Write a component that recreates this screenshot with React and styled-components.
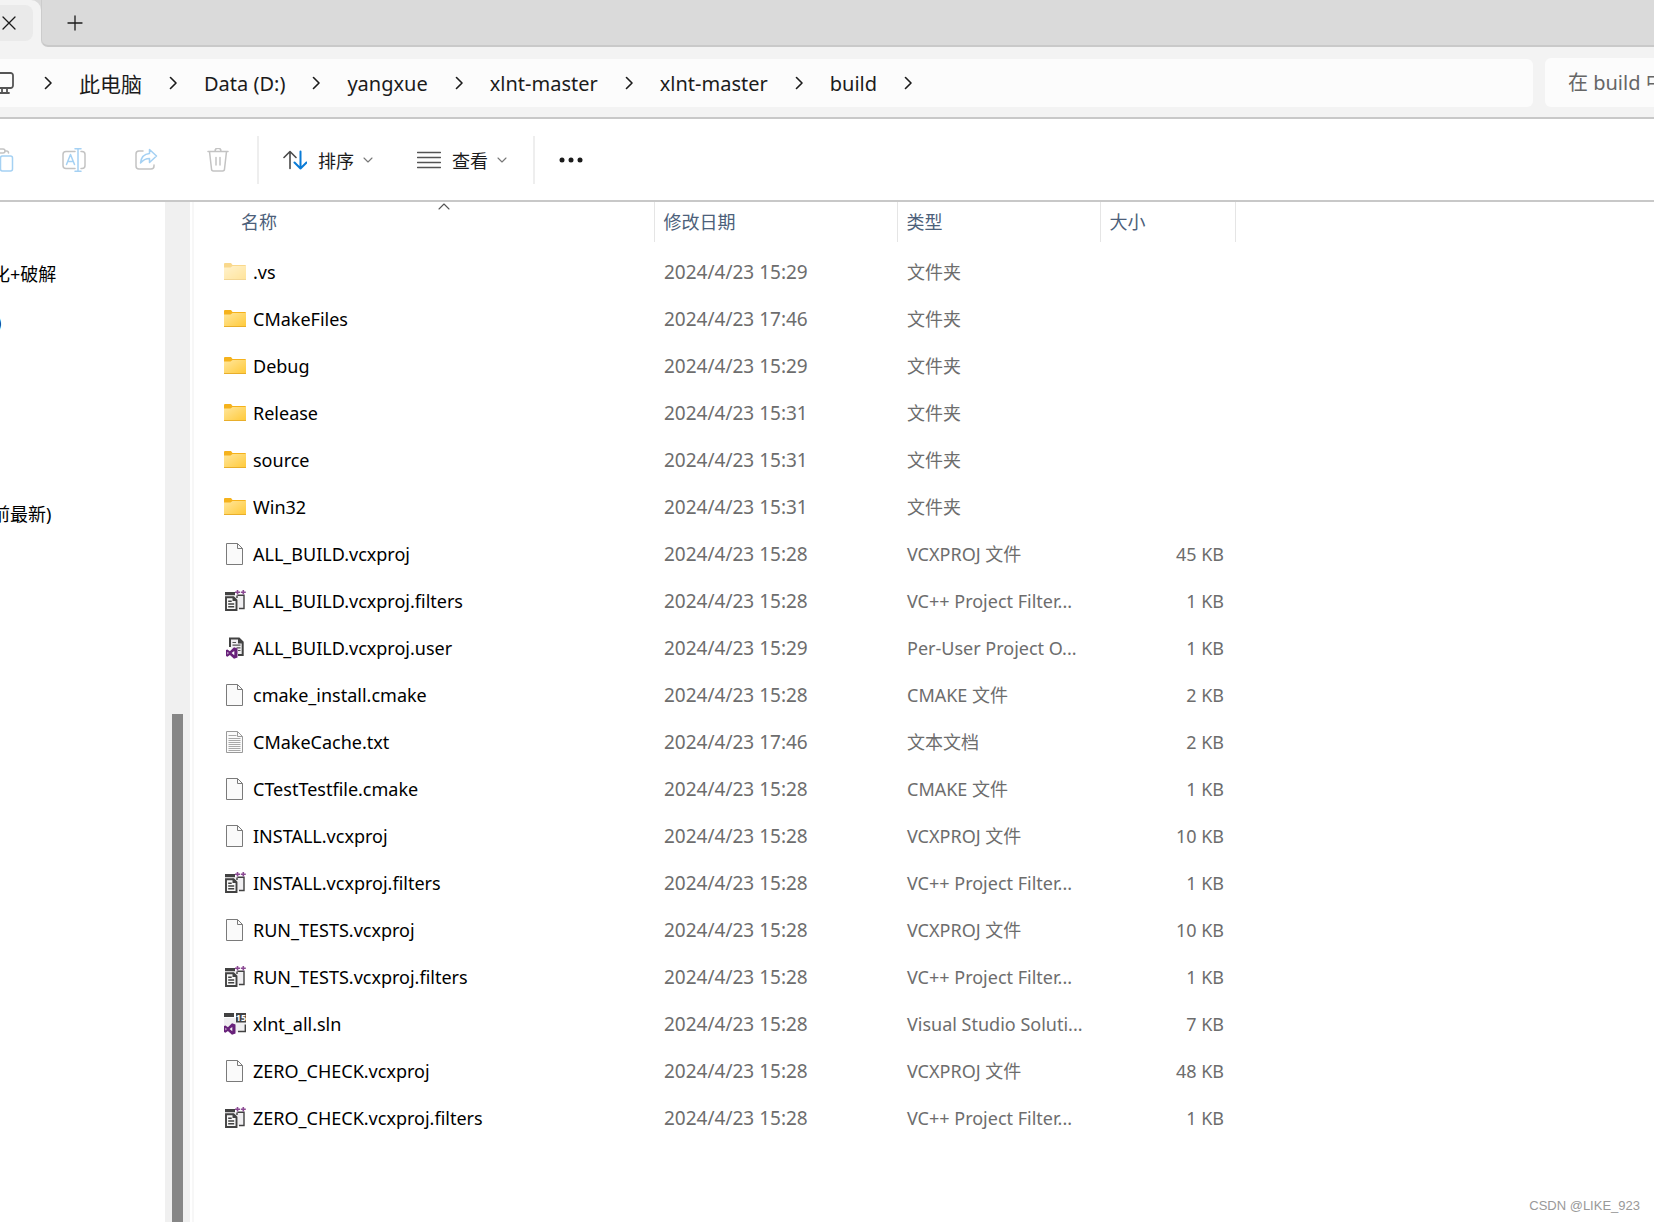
import React from "react";
import styled, { createGlobalStyle } from "styled-components";

const GlobalStyle = createGlobalStyle`
  * {
    box-sizing: border-box;
  }
  body {
    margin: 0;
    background: #ffffff;
    font-family: "Noto Sans", "Noto Sans CJK SC", sans-serif;
    font-size: 18px;
    color: #1b1b1b;
  }
  button, input {
    font: inherit;
    color: inherit;
  }
`;

const Window = styled.div`
  display: flex;
  flex-direction: column;
  width: 100%;
  min-height: 100vh;
  overflow: hidden;
`;

/* ---------- tabs ---------- */
const TabBar = styled.div`
  display: flex;
  height: 47px;
  background: linear-gradient(#dadada 50%, #f3f3f3 50%);
`;
const Tab = styled.div`
  width: 41px;
  padding: 5px 8px 6px 0;
  background: #f3f3f3;
  border-top-right-radius: 10px;
`;
const CloseButton = styled.button`
  display: flex;
  align-items: center;
  width: 100%;
  height: 36px;
  padding: 0 0 0 2px;
  border: 0;
  border-radius: 0 8px 8px 0;
  background: #eaeaea;
`;
const TabStrip = styled.div`
  flex: 1;
  display: flex;
  align-items: center;
  padding-left: 25px;
  background: #dadada;
  border-left: 1px solid #cccccc;
  border-bottom: 2px solid #c9c9c9;
  border-bottom-left-radius: 7px;
`;
const PlainButton = styled.button`
  display: flex;
  align-items: center;
  padding: 0;
  border: 0;
  background: none;
`;

/* ---------- address ---------- */
const AddressBar = styled.div`
  display: flex;
  align-items: flex-end;
  gap: 12px;
  height: 72px;
  padding-bottom: 10px;
  background: #f3f3f3;
  border-bottom: 2px solid #c8c8c8;
`;
const Crumbs = styled.nav`
  flex: 1;
  display: flex;
  align-items: center;
  gap: 27px;
  height: 48px;
  background: #fcfcfc;
  border-radius: 0 6px 6px 0;
  font-size: 20px;
`;
const Crumb = styled.a`
  color: #1b1b1b;
  font-size: ${(props) => (props.$large ? 21 : 20)}px;
  text-decoration: none;
  white-space: nowrap;
`;
const SearchInput = styled.input`
  width: 109px;
  height: 49px;
  padding: 0 0 0 23px;
  border: 0;
  border-radius: 6px 0 0 6px;
  background: #fcfcfc;
  font-size: 20px;

  &::placeholder {
    color: #666666;
    opacity: 1;
  }
`;

/* ---------- toolbar ---------- */
const ToolBar = styled.div`
  display: flex;
  align-items: center;
  height: 83px;
  border-bottom: 2px solid #c8c8c8;
`;
const IconTools = styled.div`
  display: flex;
  gap: 48px;
  width: 257px;
  margin-left: -10px;
  flex: none;
`;
const Divider = styled.div`
  width: 2px;
  height: 48px;
  margin-left: ${(props) => props.$gap || 0}px;
  background: #eeeeee;
`;
const MenuButton = styled(PlainButton)`
  gap: 11px;
  margin-left: ${(props) => props.$gap}px;

  svg:last-child {
    margin-left: -2px;
  }
`;

/* ---------- body ---------- */
const Body = styled.div`
  flex: 1;
  display: flex;
`;
const SideList = styled.ul`
  width: 165px;
  margin: 0;
  padding: 48px 0 0;
  list-style: none;
  overflow: hidden;
`;
const SideItem = styled.li`
  height: 48px;
  line-height: 48px;
  margin-left: -${(props) => props.$hidden || 8}px;
  color: #000000;
  white-space: nowrap;
`;
const ScrollTrack = styled.div`
  display: flex;
  justify-content: center;
  width: 25px;
  background: #f0f0f0;
`;
const ScrollThumb = styled.div`
  width: 11px;
  margin-top: 512px;
  background: #868686;
`;
const Content = styled.main`
  flex: 1;
  margin-left: 2px;
  border-left: 2px solid #f7f7f7;
`;
const FileTable = styled.table`
  width: 100%;
  table-layout: fixed;
  border-collapse: collapse;
`;
const Col = styled.col`
  width: ${(props) => props.$width}px;
`;
const HeadCell = styled.th`
  height: 40px;
  padding: 0 0 0 9px;
  border-right: 1px solid #e5e5e5;
  font-weight: 400;
  line-height: 40px;
  text-align: left;
  color: #4c607a;

  &:last-child {
    border-right: 0;
  }
`;
const SortedLabel = styled.div`
  position: relative;
  margin-left: 29px;
  padding-left: 9px;

  svg {
    position: absolute;
    top: 1px;
    left: 50%;
    margin-left: -5px;
  }
`;
const FileRows = styled.tbody`
  &::before {
    content: "";
    display: block;
    height: 6px;
  }
`;
const Cell = styled.td`
  height: 47px;
  padding: 0 11px 0 10px;
  font-size: ${(props) => (props.$large ? 19 : 18)}px;
  line-height: 24px;
  text-align: ${(props) => props.$align || "left"};
  white-space: nowrap;
  overflow: hidden;
  color: #6d6d6d;
`;
const FileName = styled.div`
  display: flex;
  align-items: center;
  gap: 7px;
  padding-left: 20px;
  color: #000000;

  svg {
    flex: none;
  }
`;
const Watermark = styled.div`
  position: absolute;
  right: 14px;
  bottom: 8px;
  font-family: "Liberation Sans", sans-serif;
  font-size: 13px;
  line-height: 16px;
  color: #999999;
`;

/* ---------- icons ---------- */
const Stroke = ({ w, h, children, color = "#1b1b1b", width = 1.5 }) => (
  <svg width={w} height={h} viewBox={`0 0 ${w} ${h}`} fill="none" stroke={color} strokeWidth={width}
    strokeLinecap="round" strokeLinejoin="round" aria-hidden="true">
    {children}
  </svg>
);

const Chevron = () => (
  <Stroke w={8} h={14} width={1.6}><path d="M1.500 1.500 7 7l-5.500 5.500" /></Stroke>
);
const SmallDown = () => (
  <Stroke w={10} h={6} color="#777777" width={1.1}><path d="M1 1l4 4 4-4" /></Stroke>
);

const gray = "#c3c3c3";
const blue = "#a5d1f3";

const CopyIcon = () => (
  <Stroke w={24} h={24} color={gray}>
    <path d="M9 21H4a2 2 0 0 1-2-2V5a2 2 0 0 1 2-2h3M15 3h1.500a2 2 0 0 1 2 2" />
    <rect x="7" y="1" width="8" height="4" rx="2" />
    <rect x="10.500" y="8" width="12" height="15" rx="2" stroke={blue} fill="#ffffff" />
  </Stroke>
);
const RenameIcon = () => (
  <Stroke w={24} h={24} color={gray}>
    <path d="M13 3.500H4a3 3 0 0 0-3 3v11a3 3 0 0 0 3 3h9M19 3.500h1a3 3 0 0 1 3 3v11a3 3 0 0 1-3 3h-1" />
    <path d="M4.500 16.500 8.500 6.500l4 10M6 13.500h5M16 .8v22.400M13 .8h6M13 23.200h6" stroke={blue} />
  </Stroke>
);
const ShareIcon = () => (
  <Stroke w={24} h={24} color={gray}>
    <path d="M9 3H5a3 3 0 0 0-3 3v12a3 3 0 0 0 3 3h12a3 3 0 0 0 3-3v-1" />
    <path d="M15.500 1.500 22.500 8l-7 6.500v-4c-4 0-6.500 1.500-9 4.500.5-5 3.500-9 9-9.500z" stroke={blue} />
  </Stroke>
);
const TrashIcon = () => (
  <Stroke w={24} h={24} color={gray}>
    <path d="M2 3.500h20M9 3.200a3 3 0 0 1 6 0M3.500 3.500 5.500 21a2 2 0 0 0 2 2h9a2 2 0 0 0 2-2l2-17.500M10 9.500v7.500M14 9.500v7.500" />
  </Stroke>
);
const SortIcon = () => (
  <Stroke w={24} h={20} color="#4a4a4a" width={1.6}>
    <path d="M7 18.500V1.500M1 7.500l6-6 6 6" />
    <path d="M17.500 1.500v17M11.500 12.500l6 6 6-6" stroke="#0a7bd6" strokeWidth="2" />
  </Stroke>
);
const ListIcon = () => (
  <Stroke w={24} h={18} color="#555555"><path d="M.5 1.500h23M.5 6.500h23M.5 11.500h23M.5 16.500h23" /></Stroke>
);

const FolderIcon = ({ faded }) => (
  <svg width="22" height="22" viewBox="0 0 22 22" opacity={faded ? 0.5 : 1} aria-hidden="true">
    <defs>
      <linearGradient id="folder" x1="0" y1="0" x2="1" y2="1">
        <stop offset="0" stopColor="#ffe69c" />
        <stop offset="1" stopColor="#ffc937" />
      </linearGradient>
    </defs>
    <path d="M0 3a1 1 0 0 1 1-1h6l1.500 2H21a1 1 0 0 1 1 1v4H0z" fill="#f5b21c" />
    <path d="M0 6.500h6.500L8.500 5H22v13a1 1 0 0 1-1 1H1a1 1 0 0 1-1-1z" fill="url(#folder)" />
    <path d="M0 18.500h22" stroke="#e8ae2b" />
  </svg>
);
const FileIcon = ({ lines }) => (
  <svg width="22" height="22" viewBox="0 0 22 22" fill="none" stroke={lines ? "#9a9a9a" : "#7a7a7a"} aria-hidden="true">
    <path d="M2.500.5h11l5 5v16h-16z" fill="#fafafa" />
    <path d="M13.500.5v5h5" />
    {lines && <path d="M4.500 4.500h8M4.500 7.500h12M4.500 9.500h12M4.500 11.500h12M4.500 13.500h12M4.500 15.500h12M4.500 17.500h12M4.500 19.500h12" stroke="#a8a8a8" />}
  </svg>
);
const FiltersIcon = () => (
  <svg width="22" height="22" viewBox="0 0 22 22" fill="none" aria-hidden="true">
    <path d="M1 5h19.500v14H1z" fill="#f0eff1" />
    <path d="M1 2h10v3.200H1z" fill="#424242" />
    <path d="M2 7.200h7.500l3 3v9.800H2z" fill="#f8f8f8" stroke="#424242" strokeWidth="1.900" />
    <path d="M8.500 6.500v4.500H13z" fill="#424242" />
    <path d="M4.200 11.200h3.500M4.200 14h6M4.200 16.800h6" stroke="#424242" strokeWidth="1.400" />
    <path d="M13 5.500v2.500M13.500 5.300H20v13.200h-5" stroke="#424242" strokeWidth="1.400" />
    <path d="M11 2.300h5M13.500 0v4.600M16.800 2.300h5M19.300 0v4.600" stroke="#8b4a93" strokeWidth="1.600" />
  </svg>
);
const VsMark = ({ x, y }) => (
  <g transform={`translate(${x} ${y})`}>
    <path fillRule="evenodd" fill="#68217a"
      d="M8 0 11.500 1.300v8.900L8 11.500 3.900 7.600 1.400 9.400 0 8.700V2.800L1.400 2.100l2.500 1.900zM8.300 3.600 5.600 5.800l2.700 2.100zM1.500 4.400v2.700l1.200-1.400z" />
  </g>
);
const UserIcon = () => (
  <svg width="22" height="22" viewBox="0 0 22 22" fill="none" aria-hidden="true">
    <path d="M6 10V1.500h9l3.700 3.700V18H14" fill="#f0eff1" stroke="#424242" strokeWidth="2" />
    <path d="M14 1v5.500h5z" fill="#424242" />
    <path d="M8.500 5.500H12M8.500 8.200h8M12.500 10.900h4M14 13.500h2.500" stroke="#555555" strokeWidth="1.200" />
    <VsMark x={2} y={10.3} />
  </svg>
);
const SolutionIcon = () => (
  <svg width="22" height="22" viewBox="0 0 22 22" fill="none" aria-hidden="true">
    <path d="M0 5h22v14H0z" fill="#f0eff1" />
    <path d="M0 0h10v4H0zM12 0h10v9.500H12z" fill="#424242" />
    <text x="17" y="8" textAnchor="middle" fontSize="9" fontWeight="700" fill="#ffffff">15</text>
    <path d="M21.300 11.500v7H14" stroke="#424242" strokeWidth="1.400" />
    <VsMark x={0} y={10.3} />
  </svg>
);

const icons = {
  hidden: <FolderIcon faded />,
  folder: <FolderIcon />,
  file: <FileIcon />,
  text: <FileIcon lines />,
  filters: <FiltersIcon />,
  user: <UserIcon />,
  sln: <SolutionIcon />,
};

const crumbs = ["此电脑", "Data (D:)", "yangxue", "xlnt-master", "xlnt-master", "build"];

// icon, name, time, type, size
const files = [
  ["hidden", ".vs", "15:29", "文件夹", ""],
  ["folder", "CMakeFiles", "17:46", "文件夹", ""],
  ["folder", "Debug", "15:29", "文件夹", ""],
  ["folder", "Release", "15:31", "文件夹", ""],
  ["folder", "source", "15:31", "文件夹", ""],
  ["folder", "Win32", "15:31", "文件夹", ""],
  ["file", "ALL_BUILD.vcxproj", "15:28", "VCXPROJ 文件", "45 KB"],
  ["filters", "ALL_BUILD.vcxproj.filters", "15:28", "VC++ Project Filter...", "1 KB"],
  ["user", "ALL_BUILD.vcxproj.user", "15:29", "Per-User Project O...", "1 KB"],
  ["file", "cmake_install.cmake", "15:28", "CMAKE 文件", "2 KB"],
  ["text", "CMakeCache.txt", "17:46", "文本文档", "2 KB"],
  ["file", "CTestTestfile.cmake", "15:28", "CMAKE 文件", "1 KB"],
  ["file", "INSTALL.vcxproj", "15:28", "VCXPROJ 文件", "10 KB"],
  ["filters", "INSTALL.vcxproj.filters", "15:28", "VC++ Project Filter...", "1 KB"],
  ["file", "RUN_TESTS.vcxproj", "15:28", "VCXPROJ 文件", "10 KB"],
  ["filters", "RUN_TESTS.vcxproj.filters", "15:28", "VC++ Project Filter...", "1 KB"],
  ["sln", "xlnt_all.sln", "15:28", "Visual Studio Soluti...", "7 KB"],
  ["file", "ZERO_CHECK.vcxproj", "15:28", "VCXPROJ 文件", "48 KB"],
  ["filters", "ZERO_CHECK.vcxproj.filters", "15:28", "VC++ Project Filter...", "1 KB"],
];

const App = () => {
  return (
    <Window>
      <GlobalStyle />
      <TabBar>
        <Tab>
          <CloseButton aria-label="关闭">
            <Stroke w={14} h={14} width={1.3}><path d="M1 1l12 12M13 1 1 13" /></Stroke>
          </CloseButton>
        </Tab>
        <TabStrip>
          <PlainButton aria-label="新建">
            <Stroke w={16} h={16} width={1.3}><path d="M8 1v14M1 8h14" /></Stroke>
          </PlainButton>
        </TabStrip>
      </TabBar>

      <AddressBar>
        <Crumbs>
          <Stroke w={17} h={24} color="#555555" width={1.8}>
            <path d="M-4 2H10.500a2.500 2.500 0 0 1 2.500 2.500v10a2.500 2.500 0 0 1-2.500 2.500H-4M2 17v4M7 17v4M-2 22H9" />
          </Stroke>
          <Chevron />
          {crumbs.map((name, i) => (
            <React.Fragment key={i}>
              <Crumb href="#" $large={i === 0}>{name}</Crumb>
              <Chevron />
            </React.Fragment>
          ))}
        </Crumbs>
        <SearchInput type="text" aria-label="搜索" placeholder="在 build 中搜索" />
      </AddressBar>

      <ToolBar>
        <IconTools>
          <PlainButton aria-label="粘贴"><CopyIcon /></PlainButton>
          <PlainButton aria-label="重命名"><RenameIcon /></PlainButton>
          <PlainButton aria-label="共享"><ShareIcon /></PlainButton>
          <PlainButton aria-label="删除"><TrashIcon /></PlainButton>
        </IconTools>
        <Divider $gap={10} />
        <MenuButton $gap={24}>
          <SortIcon />
          排序
          <SmallDown />
        </MenuButton>
        <MenuButton $gap={44}>
          <ListIcon />
          查看
          <SmallDown />
        </MenuButton>
        <Divider $gap={26} />
        <MenuButton $gap={26} aria-label="更多">
          <svg width="24" height="6" viewBox="0 0 24 6" fill="#1b1b1b" aria-hidden="true">
            <circle cx="3" cy="3" r="2.500" />
            <circle cx="12" cy="3" r="2.500" />
            <circle cx="21" cy="3" r="2.500" />
          </svg>
        </MenuButton>
      </ToolBar>

      <Body>
        <SideList>
          <SideItem>化+破解</SideItem>
          <SideItem $hidden={4}>)</SideItem>
          <SideItem />
          <SideItem />
          <SideItem />
          <SideItem>前最新)</SideItem>
        </SideList>
        <ScrollTrack>
          <ScrollThumb />
        </ScrollTrack>
        <Content>
          <FileTable>
            <colgroup>
              <Col $width={460} />
              <Col $width={243} />
              <Col $width={203} />
              <Col $width={135} />
              <col />
            </colgroup>
            <thead>
              <tr>
                <HeadCell>
                  <SortedLabel>
                    名称
                    <Stroke w={12} h={7} color="#555555" width={1.1}><path d="M1 6l5-5 5 5" /></Stroke>
                  </SortedLabel>
                </HeadCell>
                <HeadCell>修改日期</HeadCell>
                <HeadCell>类型</HeadCell>
                <HeadCell>大小</HeadCell>
                <HeadCell as="td" />
              </tr>
            </thead>
            <FileRows>
              {files.map(([icon, name, time, type, size]) => (
                <tr key={name}>
                  <Cell>
                    <FileName>{icons[icon]}{name}</FileName>
                  </Cell>
                  <Cell $large>2024/4/23 {time}</Cell>
                  <Cell>{type}</Cell>
                  <Cell $align="right">{size}</Cell>
                </tr>
              ))}
            </FileRows>
          </FileTable>
        </Content>
      </Body>
      <Watermark>CSDN @LIKE_923</Watermark>
    </Window>
  );
};

export default App;
